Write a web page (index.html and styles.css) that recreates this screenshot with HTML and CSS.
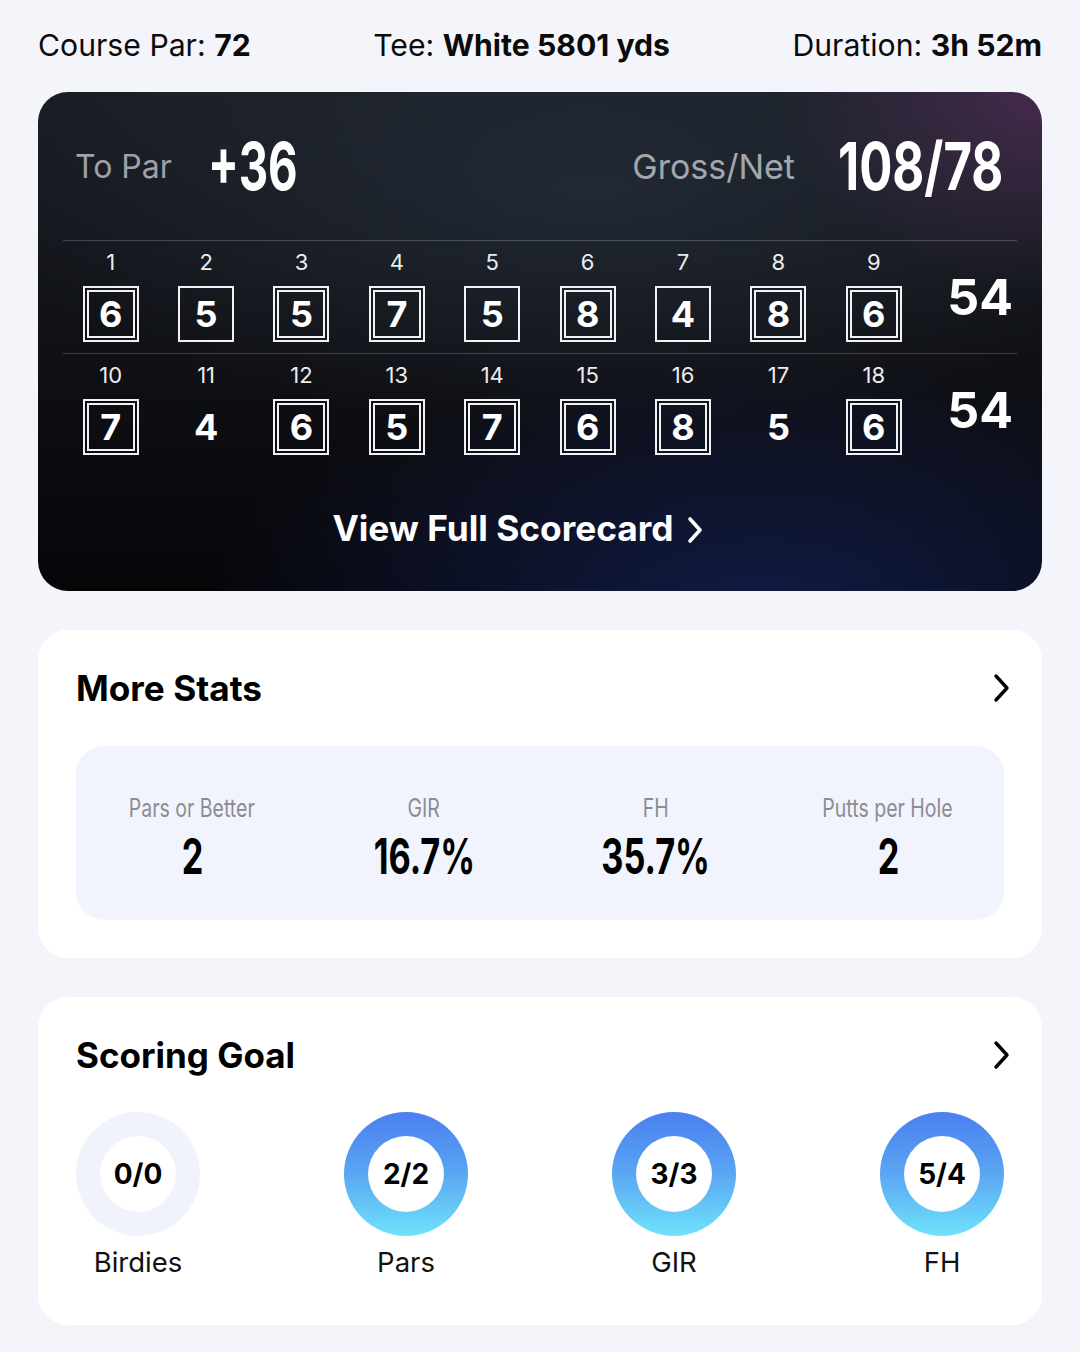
FILE: index.html
```html
<!DOCTYPE html>
<html>
<head>
<meta charset="utf-8">
<link rel="stylesheet" href="styles.css">
</head>
<body>
<div class="page">
  <div class="meta">
    <div>Course Par: <b>72</b></div>
    <div>Tee: <b>White 5801 yds</b></div>
    <div>Duration: <b>3h 52m</b></div>
  </div>

  <section class="scorecard">
    <div class="sc-head">
      <div class="sc-pair">
        <span class="sc-label">To Par</span>
        <span class="sc-big w-topar"><span class="cond-l">+36</span></span>
      </div>
      <div class="sc-pair">
        <span class="sc-label gn">Gross/Net</span>
        <span class="sc-big w-gross"><span class="cond-l wide">108/78</span></span>
      </div>
    </div>
    <div class="holes">
      <div class="hole-row">
        <div class="hole"><span class="hn">1</span><span class="box dbl">6</span></div>
        <div class="hole"><span class="hn">2</span><span class="box sgl">5</span></div>
        <div class="hole"><span class="hn">3</span><span class="box dbl">5</span></div>
        <div class="hole"><span class="hn">4</span><span class="box dbl">7</span></div>
        <div class="hole"><span class="hn">5</span><span class="box sgl">5</span></div>
        <div class="hole"><span class="hn">6</span><span class="box dbl">8</span></div>
        <div class="hole"><span class="hn">7</span><span class="box sgl">4</span></div>
        <div class="hole"><span class="hn">8</span><span class="box dbl">8</span></div>
        <div class="hole"><span class="hn">9</span><span class="box dbl">6</span></div>
        <div class="total">54</div>
      </div>
      <div class="hole-row">
        <div class="hole"><span class="hn">10</span><span class="box dbl">7</span></div>
        <div class="hole"><span class="hn">11</span><span class="box">4</span></div>
        <div class="hole"><span class="hn">12</span><span class="box dbl">6</span></div>
        <div class="hole"><span class="hn">13</span><span class="box dbl">5</span></div>
        <div class="hole"><span class="hn">14</span><span class="box dbl">7</span></div>
        <div class="hole"><span class="hn">15</span><span class="box dbl">6</span></div>
        <div class="hole"><span class="hn">16</span><span class="box dbl">8</span></div>
        <div class="hole"><span class="hn">17</span><span class="box">5</span></div>
        <div class="hole"><span class="hn">18</span><span class="box dbl">6</span></div>
        <div class="total">54</div>
      </div>
    </div>
    <div class="sc-foot">
      <span>View Full Scorecard</span>
      <svg class="chev-w" width="18" height="28" viewBox="0 0 18 28"><polyline points="4,3 14,14 4,25" fill="none" stroke="#fff" stroke-width="3.6" stroke-linecap="round" stroke-linejoin="round"/></svg>
    </div>
  </section>

  <section class="card">
    <div class="card-title">
      <span class="t-stats">More Stats</span>
      <svg width="20" height="30" viewBox="0 0 20 30"><polyline points="4,3 15,15 4,27" fill="none" stroke="#000" stroke-width="3.4" stroke-linecap="round" stroke-linejoin="round"/></svg>
    </div>
    <div class="stats">
      <div class="stat"><span class="st-label">Pars or Better</span><span class="st-val">2</span></div>
      <div class="stat"><span class="st-label">GIR</span><span class="st-val">16.7%</span></div>
      <div class="stat"><span class="st-label">FH</span><span class="st-val">35.7%</span></div>
      <div class="stat"><span class="st-label">Putts per Hole</span><span class="st-val">2</span></div>
    </div>
  </section>

  <section class="card">
    <div class="card-title">
      <span class="t-goal">Scoring Goal</span>
      <svg width="20" height="30" viewBox="0 0 20 30"><polyline points="4,3 15,15 4,27" fill="none" stroke="#000" stroke-width="3.4" stroke-linecap="round" stroke-linejoin="round"/></svg>
    </div>
    <div class="goals">
      <div class="goal"><div class="ring empty"><div class="ring-in">0/0</div></div><span class="g-label">Birdies</span></div>
      <div class="goal"><div class="ring"><div class="ring-in">2/2</div></div><span class="g-label">Pars</span></div>
      <div class="goal"><div class="ring"><div class="ring-in">3/3</div></div><span class="g-label">GIR</span></div>
      <div class="goal"><div class="ring"><div class="ring-in">5/4</div></div><span class="g-label">FH</span></div>
    </div>
  </section>
</div>
</body>
</html>
```
FILE: styles.css
```css
* { box-sizing: border-box; }
html, body { margin: 0; padding: 0; }
body {
  background: #f4f5fb;
  font-family: Inter, "Noto Sans", "DejaVu Sans", sans-serif;
  color: #0b0b0b;
  width: 1080px;
  height: 1352px;
  overflow: hidden;
}
.page { padding: 0 38px; }

.meta {
  display: flex;
  justify-content: space-between;
  padding-top: 28px;
  height: 92px;
  font-size: 30.2px;
  line-height: 34px;
}
.meta b { font-weight: 700; }

.scorecard {
  height: 499px;
  border-radius: 30px;
  color: #fff;
  background:
    radial-gradient(ellipse 260px 200px at 100% 0%, rgba(95, 50, 100, 0.6), rgba(95, 50, 100, 0) 100%),
    radial-gradient(ellipse 560px 260px at 72% 105%, rgba(25, 42, 110, 0.6), rgba(25, 42, 110, 0) 100%),
    radial-gradient(ellipse 620px 240px at 55% 20%, rgba(45, 58, 74, 0.5), rgba(45, 58, 74, 0) 100%),
    linear-gradient(180deg, #1a1d24 0%, #101116 50%, #060609 100%);
  overflow: hidden;
}
.sc-head {
  height: 148px;
  display: flex;
  align-items: center;
  justify-content: space-between;
  padding: 0 40px 0 37px;
}
.sc-pair { display: flex; align-items: center; }
.sc-label { font-size: 32px; color: #9ca1aa; margin-right: 36px; }
.sc-label.gn { font-size: 34px; color: #a2a7af; margin-right: 43px; }
.sc-big {
  display: inline-block;
  font-weight: 700;
  font-size: 66px;
  line-height: 80px;
  white-space: nowrap;
}
.w-topar { width: 84px; }
.w-gross { width: 164px; }
.cond-l {
  display: inline-block;
  transform: scaleX(0.69);
  transform-origin: 0 50%;
}
.cond-l.wide { transform: scaleX(0.745); }
.holes { margin: 0 25px; }
.hole-row {
  border-top: 1px solid rgba(255, 255, 255, 0.2);
  height: 113px;
  display: grid;
  grid-template-columns: repeat(9, 95.4px) 1fr;
  padding-top: 9px;
}
.hole { display: flex; flex-direction: column; align-items: center; }
.hn { font-size: 22px; line-height: 24px; color: #ececec; }
.box {
  margin-top: 12px;
  width: 56px;
  height: 56px;
  display: flex;
  align-items: center;
  justify-content: center;
  font-size: 36px;
  font-weight: 700;
  line-height: 1;
}
.box.sgl { border: 2px solid #f2f2f2; }
.box.dbl { border: 6px double #f2f2f2; }
.total {
  text-align: right;
  padding-right: 4px;
  padding-top: 17px;
  font-size: 50px;
  line-height: 60px;
  font-weight: 700;
}
.sc-foot {
  height: 125px;
  display: flex;
  align-items: center;
  justify-content: center;
  gap: 12px;
  font-size: 35.3px;
  font-weight: 700;
  padding-right: 44px;
}
.chev-w { margin-top: 2px; }

.card {
  margin-top: 39px;
  height: 328px;
  background: #fff;
  border-radius: 30px;
  padding: 38px;
}
.card-title {
  height: 40px;
  display: flex;
  align-items: center;
  justify-content: space-between;
  font-weight: 700;
  color: #000;
}
.card-title svg { margin-right: -8px; }
.t-stats { font-size: 35.2px; }
.t-goal { font-size: 35px; }
.stats {
  margin-top: 38px;
  height: 174px;
  background: #f1f4fd;
  border-radius: 28px;
  display: grid;
  grid-template-columns: repeat(4, 1fr);
  padding-top: 48px;
}
.stat { display: flex; flex-direction: column; align-items: center; }
.st-label {
  display: inline-block;
  font-size: 25px;
  line-height: 28px;
  color: #8b8d92;
  white-space: nowrap;
  transform: scaleX(0.78);
}
.st-val {
  display: inline-block;
  margin-top: 8px;
  font-weight: 700;
  font-size: 49px;
  line-height: 54px;
  color: #000;
  white-space: nowrap;
  transform: scaleX(0.7);
}

.goals {
  margin-top: 37px;
  display: flex;
  justify-content: space-between;
}
.goal { display: flex; flex-direction: column; align-items: center; width: 124px; }
.ring {
  width: 124px;
  height: 124px;
  border-radius: 50%;
  padding: 24px;
  background: linear-gradient(180deg, #4a7ff0 0%, #5aa6f2 50%, #6fe3fb 100%);
}
.ring.empty { background: #f1f3fc; }
.ring-in {
  width: 76px;
  height: 76px;
  border-radius: 50%;
  background: #fff;
  display: flex;
  align-items: center;
  justify-content: center;
  font-size: 28px;
  font-weight: 700;
  color: #000;
}
.g-label {
  margin-top: 10px;
  font-size: 27.5px;
  line-height: 32px;
  color: #111;
  white-space: nowrap;
}
```
